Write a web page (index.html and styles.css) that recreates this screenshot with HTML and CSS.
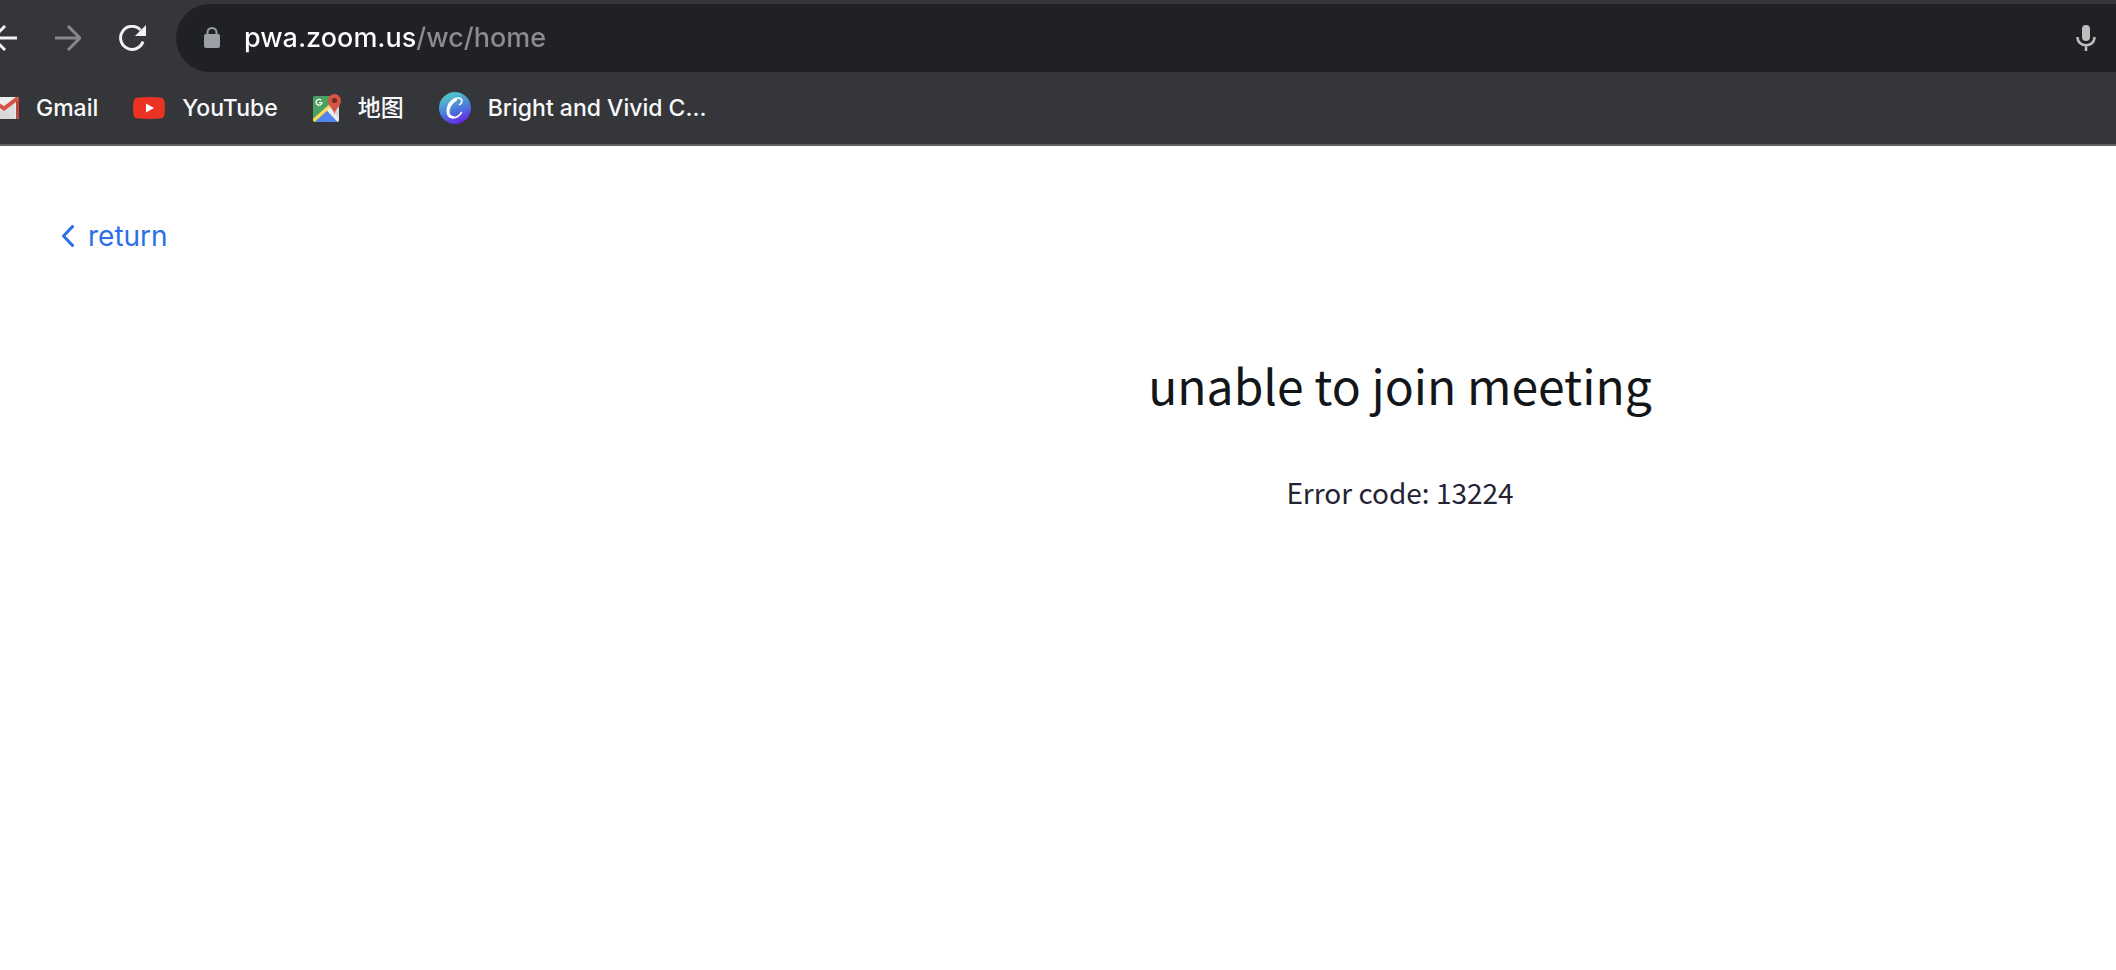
FILE: index.html
```html
<!DOCTYPE html>
<html lang="en">
<head>
<meta charset="utf-8">
<title>Zoom</title>
<link rel="stylesheet" href="styles.css">
</head>
<body>
<header class="browser">
  <div class="toolbar">
    <nav class="nav" aria-label="Browser navigation">
      <button class="nav-button" type="button" aria-label="Back">
        <svg width="17" height="26" viewBox="0 0 17 26" fill="none" stroke="#f1f3f4" stroke-width="3"><path d="M17 13H-7M5 1-7 13 5 25"/></svg>
      </button>
      <button class="nav-button" type="button" aria-label="Forward">
        <svg width="26" height="26" viewBox="0 0 26 26" fill="none" stroke="#87888a" stroke-width="3"><path d="M0 13h24M13 1l12 12-12 12"/></svg>
      </button>
      <button class="nav-button" type="button" aria-label="Reload">
        <svg width="28" height="26" viewBox="0 0 28 26"><path d="M24 16.500A11.500 11.500 0 1 1 21.500 5" fill="none" stroke="#f1f3f4" stroke-width="3"/><path d="M27 0v11H16z" fill="#f1f3f4"/></svg>
      </button>
    </nav>
    <form class="address-bar">
      <svg width="16" height="22" viewBox="0 0 16 22"><path d="M3.500 9V5.500a4.500 4.500 0 0 1 9 0V9" fill="none" stroke="#9aa0a6" stroke-width="2"/><rect y="7" width="16" height="14" rx="2" fill="#9aa0a6"/></svg>
      <input class="address" type="text" value="pwa.zoom.us/wc/home" aria-label="Address" spellcheck="false">
      <button class="nav-button" type="button" aria-label="Voice search">
        <svg width="20" height="26" viewBox="0 0 20 26"><rect x="6" y="0" width="8" height="16" rx="4" fill="#bdbdbd"/><path d="M1.500 12c0 11 17 11 17 0M10 20v6" fill="none" stroke="#bdbdbd" stroke-width="2.500"/></svg>
      </button>
    </form>
  </div>
  <nav class="bookmarks" aria-label="Bookmarks">
    <a class="bookmark" href="#">
      <svg width="19" height="22" viewBox="13 0 19 22"><rect width="32" height="22" rx="2" fill="#ececec"/><path d="M16 12 29 22H3z" fill="#d9d9d9"/><path d="M16 12 28 3v19z" fill="#dedede"/><path d="M29 3 32 1v19q0 2-2 2h-1z" fill="#b9473b"/><path d="M0 0 17 11.500 31 1" fill="none" stroke="#d65446" stroke-width="4"/></svg>
      <span>Gmail</span>
    </a>
    <a class="bookmark" href="#">
      <svg width="32" height="22" viewBox="0 0 32 22"><path d="M5 .4Q16-.4 27 .4 31 .6 31.500 4.500q.8 6.500 0 13-.5 3.900-4.500 4.100-11 .8-22 0-4-.2-4.500-4.100-.8-6.500 0-13Q1 .6 5 .4z" fill="#eb3223"/><path d="M13 6.500v9l8-4.500z" fill="#fff"/></svg>
      <span>YouTube</span>
    </a>
    <a class="bookmark" href="#">
      <svg width="28" height="28" viewBox="0 0 28 28"><defs><clipPath id="map"><rect y="2" width="26" height="26" rx="2"/></clipPath></defs><g clip-path="url(#map)"><path d="M0 2h26v26H0z" fill="#4a9f61"/><path d="m15 15 13-13v26z" fill="#d8d8d8"/><path d="M2 28 15 16 26 28z" fill="#5386ec"/><path d="M0 27 17 12" stroke="#f9d85b" stroke-width="3.500"/><path d="m15 15 12 13" stroke="#eee" stroke-width="3.500"/></g><path d="M8.200 6.300A2.900 2.900 0 1 0 8.900 8.600H6" fill="none" stroke="#fff" stroke-width="1.300"/><path d="M21.500 21.500c0-7-6.500-8.500-6.500-15a6.500 6.500 0 0 1 13 0c0 6.500-6.500 8-6.500 15z" fill="#d65444"/><circle cx="21.500" cy="6.500" r="2.500" fill="#6d2b22"/></svg>
      <span>地图</span>
    </a>
    <a class="bookmark" href="#">
      <svg width="32" height="32" viewBox="0 0 32 32"><defs><linearGradient id="disc" x1=".3" y1="0" x2=".65" y2="1"><stop offset=".15" stop-color="#4fbccb"/><stop offset=".6" stop-color="#4c72dd"/><stop offset="1" stop-color="#6a20e8"/></linearGradient></defs><circle cx="16" cy="16" r="16" fill="url(#disc)"/><path d="M20.500 12.500c2.600-.5 3.400-5.500.3-6.300C15 5 8.600 11 8.300 18.500c-.3 9 9.200 9.500 14.200 2" fill="none" stroke="#fff" stroke-width="1.600" stroke-linecap="round"/><path d="M17 7.600C12 10.500 8.200 16.500 9.500 22q1.200 3.200 4.500 3.300" fill="none" stroke="#fff" stroke-width="2.400" stroke-linecap="round"/></svg>
      <span>Bright and Vivid C...</span>
    </a>
  </nav>
</header>
<main class="page">
  <a class="return" href="#">
    <svg width="12" height="22" viewBox="0 0 12 22" fill="none" stroke="#2d6fe5" stroke-width="3"><path d="M11.500.5 1.500 11l10 10.500"/></svg>
    <span>return</span>
  </a>
  <section class="message">
    <h1 class="title">unable to join meeting</h1>
    <p class="detail">Error code: 13224</p>
  </section>
</main>
</body>
</html>
```
FILE: styles.css
```css
* {
  box-sizing: border-box;
}

body {
  margin: 0;
  background: #fff;
  font-family: Inter, "Noto Sans CJK SC", sans-serif;
}

svg {
  display: block;
  flex: none;
}

.browser {
  background: #35363a;
  border-bottom: 2px solid #606064;
}

.toolbar {
  display: flex;
  align-items: center;
  padding-top: 4px;
}

.nav {
  display: flex;
  align-items: center;
  gap: 38px;
  width: 176px;
}

.nav-button {
  padding: 0;
  border: 0;
  background: none;
}

.address-bar {
  display: flex;
  flex: 1;
  align-items: center;
  height: 68px;
  padding: 0 20px 0 28px;
  border-radius: 34px 0 0 34px;
  background: #202124;
}

.address {
  flex: 1;
  min-width: 0;
  margin-left: 24px;
  padding: 0;
  border: 0;
  outline: 0;
  background: linear-gradient(90deg, #fff 172px, #8b8c8e 172px);
  background-clip: text;
  -webkit-background-clip: text;
  color: transparent;
  font: 500 27px/40px Inter, sans-serif;
}

.bookmarks {
  display: flex;
  align-items: center;
  gap: 35px;
  height: 72px;
}

.bookmark {
  display: flex;
  align-items: center;
  gap: 17px;
  color: #f8f9fa;
  font-size: 23px;
  font-weight: 500;
  line-height: 32px;
  text-decoration: none;
}

.page {
  padding: 70px 0 0 62px;
}

.return {
  display: inline-flex;
  align-items: center;
  gap: 14px;
  color: #2d6fe5;
  font-size: 28px;
  line-height: 40px;
  text-decoration: none;
}

.message {
  margin: 88px 0 0 622px;
  font-family: "Noto Sans CJK SC", sans-serif;
  text-align: center;
}

.title {
  margin: 0;
  color: #131619;
  font-size: 48px;
  font-weight: 400;
  line-height: 80px;
}

.detail {
  margin: 46px 0 0;
  color: #232333;
  font-size: 28px;
  line-height: 44px;
}
```
